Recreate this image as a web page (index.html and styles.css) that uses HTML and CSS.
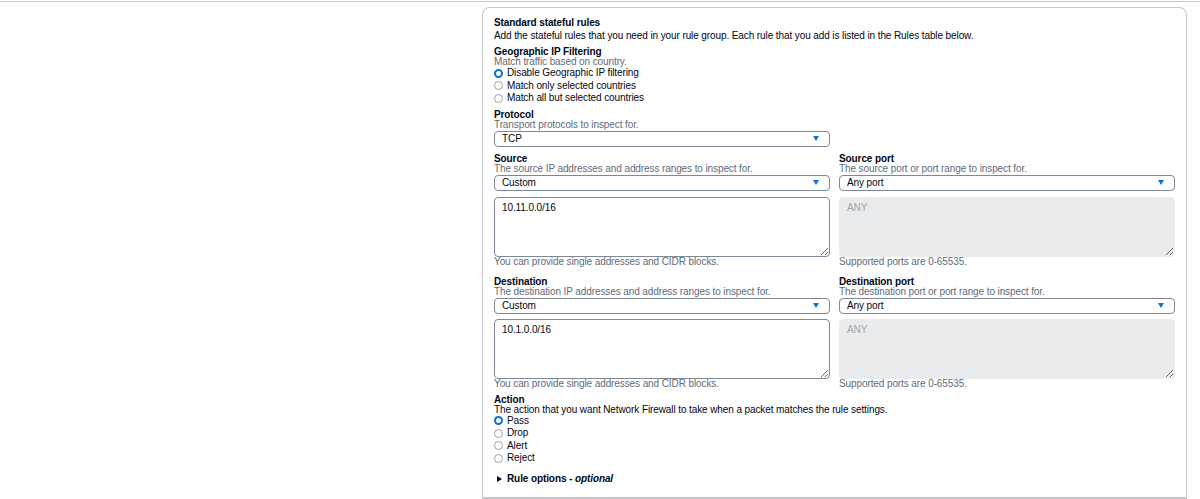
FILE: index.html
```html
<!DOCTYPE html>
<html>
<head>
<meta charset="utf-8">
<link rel="stylesheet" href="styles.css">
</head>
<body>
<div class="topline"></div>
<div class="page">
  <div class="side"></div>
  <div class="card">
    <div class="head">
      <div class="title">Standard stateful rules</div>
      <div class="subtitle">Add the stateful rules that you need in your rule group. Each rule that you add is listed in the Rules table below.</div>
    </div>

    <div class="field">
      <div class="label">Geographic IP Filtering</div>
      <div class="desc">Match traffic based on country.</div>
      <div class="radios">
        <div class="radio on"><span class="dot"></span>Disable Geographic IP filtering</div>
        <div class="radio"><span class="dot"></span>Match only selected countries</div>
        <div class="radio"><span class="dot"></span>Match all but selected countries</div>
      </div>
    </div>

    <div class="field">
      <div class="label">Protocol</div>
      <div class="desc">Transport protocols to inspect for.</div>
      <div class="select half"><span>TCP</span><span class="caret"></span></div>
    </div>

    <div class="grid">
      <div class="field">
        <div class="label">Source</div>
        <div class="desc">The source IP addresses and address ranges to inspect for.</div>
        <div class="select"><span>Custom</span><span class="caret"></span></div>
        <textarea class="area" readonly>10.11.0.0/16</textarea>
        <div class="hint">You can provide single addresses and CIDR blocks.</div>
      </div>
      <div class="field">
        <div class="label">Source port</div>
        <div class="desc">The source port or port range to inspect for.</div>
        <div class="select"><span>Any port</span><span class="caret"></span></div>
        <textarea class="area off" readonly>ANY</textarea>
        <div class="hint">Supported ports are 0-65535.</div>
      </div>
    </div>

    <div class="grid gap-top">
      <div class="field">
        <div class="label">Destination</div>
        <div class="desc">The destination IP addresses and address ranges to inspect for.</div>
        <div class="select"><span>Custom</span><span class="caret"></span></div>
        <textarea class="area" readonly>10.1.0.0/16</textarea>
        <div class="hint">You can provide single addresses and CIDR blocks.</div>
      </div>
      <div class="field">
        <div class="label">Destination port</div>
        <div class="desc">The destination port or port range to inspect for.</div>
        <div class="select"><span>Any port</span><span class="caret"></span></div>
        <textarea class="area off" readonly>ANY</textarea>
        <div class="hint">Supported ports are 0-65535.</div>
      </div>
    </div>

    <div class="field action">
      <div class="label">Action</div>
      <div class="desc dark">The action that you want Network Firewall to take when a packet matches the rule settings.</div>
      <div class="radios">
        <div class="radio on"><span class="dot"></span>Pass</div>
        <div class="radio"><span class="dot"></span>Drop</div>
        <div class="radio"><span class="dot"></span>Alert</div>
        <div class="radio"><span class="dot"></span>Reject</div>
      </div>
    </div>

    <div class="expand"><span class="tri"></span><b>Rule options - <i>optional</i></b></div>
  </div>
  <div class="rightside"></div>
</div>
</body>
</html>
```

FILE: styles.css
```css
* { box-sizing: border-box; }
html, body { margin: 0; padding: 0; }
body {
  background: #ffffff;
  font-family: "Liberation Sans", Arial, sans-serif;
  font-size: 10px;
  letter-spacing: -0.1px;
  color: #000716;
  width: 1200px;
  height: 499px;
  overflow: hidden;
}
.topline {
  margin-top: 1px;
  height: 1px;
  background: #c6c6cd;
}
.page {
  display: flex;
  padding-top: 5px;
  height: 497px;
}
.side { width: 482px; flex: none; }
.rightside { flex: 1; background: #fdfdfd; }
.card {
  width: 705px;
  flex: none;
  border: 1px solid #c6c6cd;
  border-bottom: 2px solid #c6c6cd;
  border-radius: 8px 8px 0 0;
  padding: 9px 11px 0 11px;
  height: 492px;
  background: #fff;
}
.head { line-height: 12.5px; }
.title { font-weight: bold; }
.subtitle { color: #000716; }

.field { margin-top: 5px; }
.field.action { margin-top: 6px; }
.label { font-weight: bold; line-height: 10px; }
.desc { color: #5f6b7a; line-height: 10px; }
.desc.dark { color: #000716; }
.radios { margin-top: 0; }
.radio {
  display: flex;
  align-items: center;
  line-height: 12.5px;
  height: 12.5px;
}
.dot {
  width: 9px;
  height: 9px;
  border-radius: 50%;
  border: 1px solid #9ba0a8;
  margin: 0 4px 0 0;
  flex: none;
}
.radio.on .dot {
  border: 2.5px solid #0972d3;
  background: #fff;
}
.select {
  margin-top: 1px;
  height: 16px;
  border: 1px solid #7d8998;
  border-radius: 4px;
  display: flex;
  align-items: center;
  justify-content: space-between;
  padding: 0 10px 0 7px;
  width: 100%;
}
.select.half { width: 336px; }
.caret {
  width: 0; height: 0;
  border-left: 3.5px solid transparent;
  border-right: 3.5px solid transparent;
  border-top: 5px solid #0972d3;
}
.grid {
  display: grid;
  grid-template-columns: 336px 336px;
  column-gap: 9px;
}
.grid .field { margin-top: 7px; }
.grid.gap-top .field { margin-top: 10px; }
.area {
  display: block;
  margin-top: 6px;
  width: 100%;
  height: 60px;
  border: 1px solid #7d8998;
  border-radius: 4px;
  padding: 4px 7px;
  font: inherit;
  font-size: 10px;
  letter-spacing: -0.1px;
  color: #000716;
  resize: vertical;
  outline: none;
  background: #fff;
}
.grid.gap-top .area { margin-top: 5px; }
.area.off {
  background: #e9ebed;
  border-color: #e9ebed;
  color: #9ba7b6;
}
.hint { color: #5f6b7a; line-height: 10px; }
.expand {
  margin-top: 8px;
  line-height: 12px;
  display: flex;
  align-items: center;
}
.tri {
  width: 0; height: 0;
  border-top: 3px solid transparent;
  border-bottom: 3px solid transparent;
  border-left: 5px solid #000716;
  margin: 0 5px 0 3px;
}
.expand i { font-style: italic; }
```
